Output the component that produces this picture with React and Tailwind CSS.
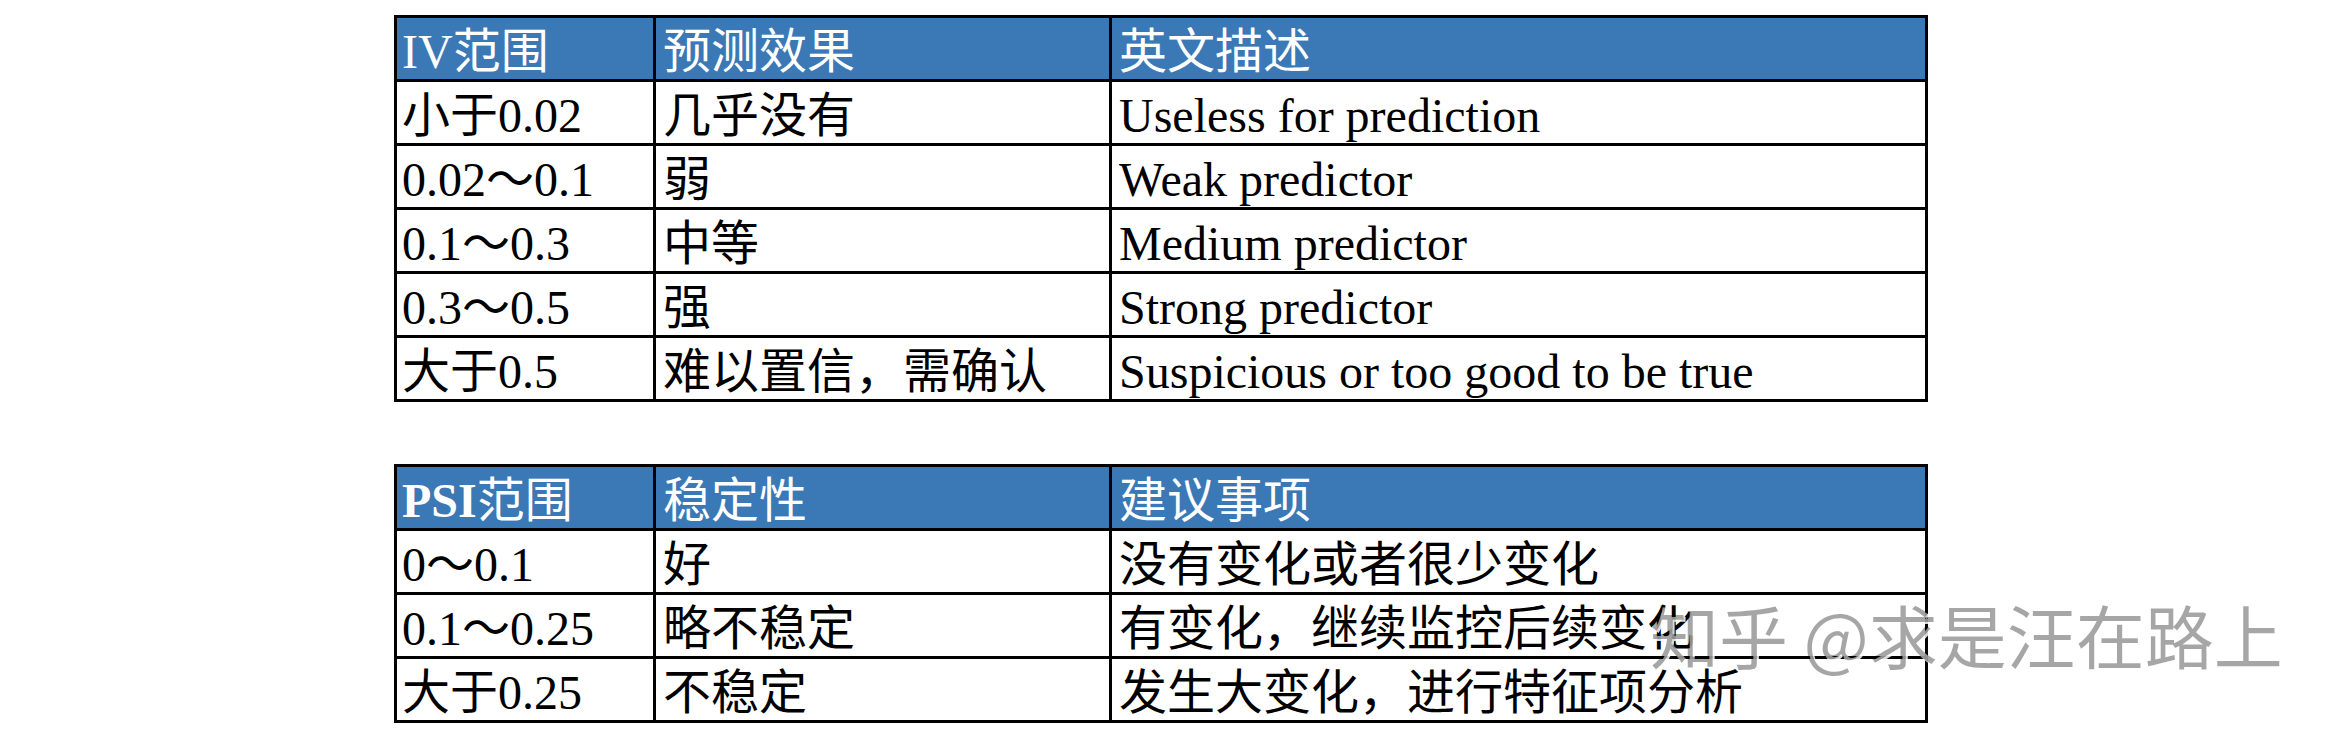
const IV_ROWS = [
  ['小于0.02', '几乎没有', 'Useless for prediction'],
  ['0.02～0.1', '弱', 'Weak predictor'],
  ['0.1～0.3', '中等', 'Medium predictor'],
  ['0.3～0.5', '强', 'Strong predictor'],
  ['大于0.5', '难以置信，需确认', 'Suspicious or too good to be true'],
];

const PSI_ROWS = [
  ['0～0.1', '好', '没有变化或者很少变化'],
  ['0.1～0.25', '略不稳定', '有变化，继续监控后续变化'],
  ['大于0.25', '不稳定', '发生大变化，进行特征项分析'],
];

const PAD = ['pl-[5px]', 'pl-[7px]', 'pl-[7px]'];

function Cell({ children, head, i }) {
  return (
    <div
      className={`h-[64px] border-r-[3px] border-b-[3px] border-black pt-[6px] leading-[55px] whitespace-nowrap overflow-hidden ${PAD[i]} ${
        head ? 'bg-[#3b78b6] text-white' : 'bg-white text-black'
      }`}
    >
      {children}
    </div>
  );
}

function RangeTable({ header, rows }) {
  return (
    <div className="grid w-fit grid-cols-[259px_456px_816px] border-l-[3px] border-t-[3px] border-black">
      {header.map((h, i) => (
        <Cell key={i} head i={i}>
          {h}
        </Cell>
      ))}
      {rows.map((row, r) =>
        row.map((text, i) => (
          <Cell key={`${r}-${i}`} i={i}>
            {text}
          </Cell>
        ))
      )}
    </div>
  );
}

export default function App() {
  return (
    <div
      className="relative h-[732px] w-[2334px] overflow-hidden bg-white pl-[394px] pt-[15px] text-[48px]"
      style={{ fontFamily: "'Liberation Serif', 'Noto Sans CJK SC', serif" }}
    >
      <div className="flex flex-col gap-[62px]">
        <RangeTable header={['IV范围', '预测效果', '英文描述']} rows={IV_ROWS} />
        <RangeTable
          header={[
            <>
              <span className="font-bold">PSI</span>范围
            </>,
            '稳定性',
            '建议事项',
          ]}
          rows={PSI_ROWS}
        />
      </div>

      {/* watermark */}
      <div
        className="absolute left-[1650px] top-[600px] whitespace-nowrap text-[69px] leading-none text-black/35 [text-shadow:2px_2px_0_rgba(255,255,255,0.85)]"
        style={{ fontFamily: "'Noto Sans CJK SC', sans-serif" }}
      >
        知乎 @求是汪在路上
      </div>
    </div>
  );
}
